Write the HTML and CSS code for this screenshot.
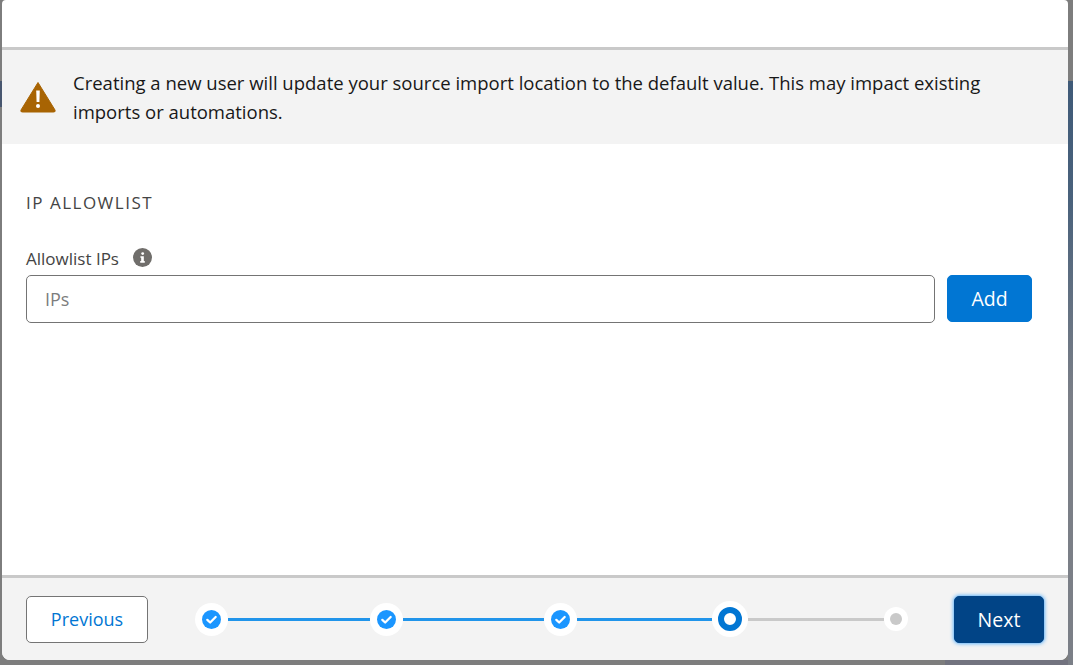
FILE: index.html
```html
<!DOCTYPE html>
<html lang="en">
<head>
    <meta charset="UTF-8">
    <meta name="viewport" content="width=device-width, initial-scale=1.0">
    <title>IP Allowlist</title>
    <link rel="stylesheet" href="styles.css">
</head>
<body>
<div class="modal">
    <header class="modal-header"></header>
    <div class="alert">
        <svg class="alert-icon" viewBox="0 0 36 32" aria-hidden="true">
            <path d="M18 1.5 L35 29 Q35.8 31 33.6 31 L2.4 31 Q0.2 31 1 29 Z" fill="#a86403" stroke="#a86403" stroke-linejoin="round"/>
            <path d="M16.2 9.5 h3.6 l-0.4 11.5 h-2.8 Z" fill="#fff"/>
            <circle cx="18" cy="25" r="2" fill="#fff"/>
        </svg>
        <p>Creating a new user will update your source import location to the default value. This may impact existing imports or automations.</p>
    </div>
    <main class="modal-body">
        <h2 class="section-title">IP ALLOWLIST</h2>
        <div class="field-label">
            <label for="ips">Allowlist IPs</label>
            <svg class="info-icon" viewBox="0 0 20 20" aria-hidden="true">
                <circle cx="10" cy="10" r="10" fill="#706e6b"/>
                <circle cx="10.2" cy="5.9" r="1.5" fill="#fff"/>
                <path d="M7.8 8.6 h3.6 v5.2 h1 v1.6 h-4.8 v-1.6 h1 v-3.6 h-0.8 Z" fill="#fff"/>
            </svg>
        </div>
        <div class="field-row">
            <input type="text" id="ips" placeholder="IPs">
            <button type="button" class="btn btn-add">Add</button>
        </div>
    </main>
    <footer class="modal-footer">
        <button type="button" class="btn btn-previous">Previous</button>
        <div class="progress">
            <span class="step step-done">
                <svg viewBox="0 0 20 20" aria-hidden="true"><circle cx="10" cy="10" r="10" fill="#1b96ff"/><path d="M5.6 10.4 L8.6 13.2 L14.4 7.4" fill="none" stroke="#fff" stroke-width="2.4" stroke-linecap="round" stroke-linejoin="round"/></svg>
            </span>
            <span class="line line-done"></span>
            <span class="step step-done">
                <svg viewBox="0 0 20 20" aria-hidden="true"><circle cx="10" cy="10" r="10" fill="#1b96ff"/><path d="M5.6 10.4 L8.6 13.2 L14.4 7.4" fill="none" stroke="#fff" stroke-width="2.4" stroke-linecap="round" stroke-linejoin="round"/></svg>
            </span>
            <span class="line line-done"></span>
            <span class="step step-done">
                <svg viewBox="0 0 20 20" aria-hidden="true"><circle cx="10" cy="10" r="10" fill="#1b96ff"/><path d="M5.6 10.4 L8.6 13.2 L14.4 7.4" fill="none" stroke="#fff" stroke-width="2.4" stroke-linecap="round" stroke-linejoin="round"/></svg>
            </span>
            <span class="line line-done line-short"></span>
            <span class="step step-current"><i></i></span>
            <span class="line"></span>
            <span class="step step-todo"><i></i></span>
        </div>
        <button type="button" class="btn btn-next">Next</button>
    </footer>
</div>
</body>
</html>
```

FILE: styles.css
```css
:root {
    --brand: #0176d3;
    --brand-dark: #014486;
    --step-blue: #2094ea;
    --divider: #c9c9c9;
    --panel: #f3f3f3;
    --text-color: #181818;
    --label-color: #444444;
}
html, body {
    height: 100%;
}
body {
    margin: 0;
    overflow: hidden;
    font-family: "Open Sans", "Noto Sans", sans-serif;
    color: var(--text-color);
    background:
        linear-gradient(transparent 81px, #47566f 81px, #47566f 107px, transparent 107px) left / 2px 100% no-repeat,
        linear-gradient(#7d7d7d 81px, #3f5a78 81px, #4a627c 200px, #7b7f87 400px) right / 5px 100% no-repeat,
        linear-gradient(#72737f, #72737f) right bottom / 128px 5px no-repeat,
        #7d7d7d;
}
.modal {
    display: flex;
    flex-direction: column;
    box-sizing: border-box;
    width: 1066px;
    height: 660px;
    margin-left: 2px;
    background-color: #ffffff;
    border-radius: 4px 4px 8px 8px;
    overflow: hidden;
}
.modal-header {
    height: 47px;
    flex: none;
    border-bottom: 3px solid var(--divider);
}
.alert {
    display: flex;
    align-items: center;
    gap: 17px;
    height: 94px;
    flex: none;
    padding: 0 60px 0 18px;
    box-sizing: border-box;
    background-color: var(--panel);
}
.alert-icon {
    width: 36px;
    height: 32px;
    flex: none;
}
.alert p {
    margin: 0;
    font-size: 18.5px;
    line-height: 29px;
}
.modal-body {
    flex: 1;
    padding: 48px 36px 0 24px;
}
.section-title {
    margin: 0 0 33px;
    font-size: 17px;
    font-weight: 400;
    line-height: 22px;
    letter-spacing: 1.5px;
    color: var(--label-color);
}
.field-label {
    display: flex;
    align-items: center;
    gap: 14px;
    height: 22px;
    margin-bottom: 6px;
    font-size: 17px;
    color: var(--label-color);
}
.info-icon {
    width: 19px;
    height: 19px;
    margin-top: -1px;
}
.field-row {
    display: flex;
    gap: 12px;
}
.field-row input {
    flex: 1;
    height: 48px;
    box-sizing: border-box;
    padding: 0 18px;
    border: 1px solid #747474;
    border-radius: 5px;
    font-family: inherit;
    font-size: 18px;
    background: #fff;
}
.field-row input::placeholder {
    color: #7d7d7d;
    opacity: 1;
}
.btn {
    height: 47px;
    padding: 0;
    border-radius: 5px;
    font-family: inherit;
    font-size: 18px;
    cursor: pointer;
}
.btn-add {
    width: 85px;
    border: 1px solid var(--brand);
    background-color: var(--brand);
    color: #ffffff;
    font-size: 19.5px;
}
.modal-footer {
    display: flex;
    align-items: center;
    height: 85px;
    flex: none;
    padding: 0 24px;
    box-sizing: border-box;
    border-top: 3px solid var(--divider);
    background-color: var(--panel);
}
.btn-previous {
    width: 122px;
    border: 1px solid #747474;
    background-color: #ffffff;
    color: var(--brand);
}
.btn-next {
    width: 90px;
    margin-left: 46px;
    border: 1px solid var(--brand-dark);
    background-color: var(--brand-dark);
    color: #ffffff;
    box-shadow: 0 0 4px #1b96ff;
    font-size: 19.5px;
}
.progress {
    display: flex;
    align-items: center;
    margin-left: 47px;
}
.step {
    display: flex;
    align-items: center;
    justify-content: center;
    flex: none;
    width: 33px;
    height: 33px;
    border-radius: 50%;
    background-color: #ffffff;
}
.step svg {
    width: 19px;
    height: 19px;
}
.step-current {
    width: 36px;
    height: 36px;
}
.step-current i {
    width: 12px;
    height: 12px;
    border: 6px solid var(--brand);
    border-radius: 50%;
    background-color: #ffffff;
}
.step-todo {
    width: 24px;
    height: 24px;
}
.step-todo i {
    width: 12px;
    height: 12px;
    border-radius: 50%;
    background-color: var(--divider);
}
.line {
    flex: none;
    width: 136px;
    height: 3px;
    background-color: var(--divider);
}
.line-done {
    width: 141.5px;
    background-color: var(--step-blue);
}
.line-short {
    width: 135px;
}
```
